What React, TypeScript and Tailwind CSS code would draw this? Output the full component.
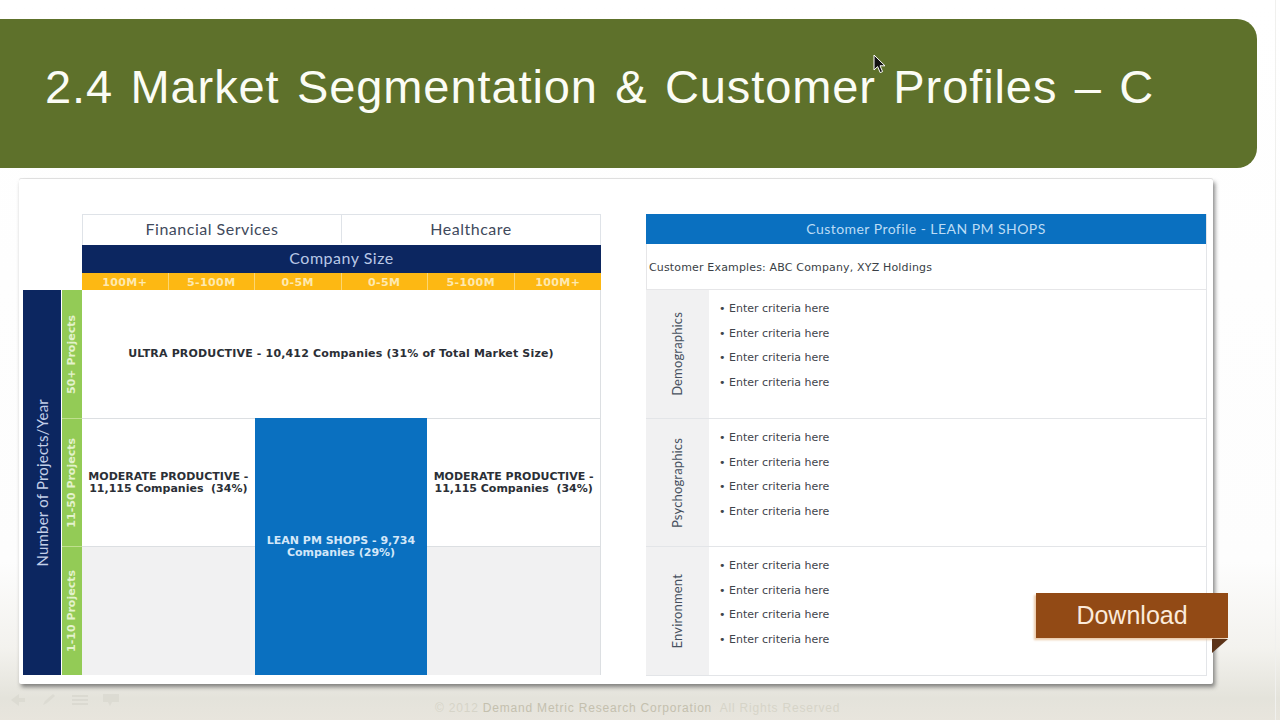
import React from 'react';

const SIZES = ['100M+', '5-100M', '0-5M', '0-5M', '5-100M', '100M+'];
const PROFILE = [
  { name: 'Demographics', rowClass: 'h-[129px]' },
  { name: 'Psychographics', rowClass: 'h-[128px]' },
  { name: 'Environment', rowClass: 'h-[128px]' },
];

const gothic = "font-['Lato','Open_Sans',sans-serif]";
const verdana = "font-['DejaVu_Sans',sans-serif]";

function Cursor() {
  return (
    <svg className="absolute left-[873px] top-[54px]" width="13" height="20" viewBox="0 0 13 20">
      <path d="M1 1v15l3.6-3.4 2.6 6 2.4-1-2.6-5.8h5z" fill="#111" stroke="#fff" strokeWidth="1" />
    </svg>
  );
}

function MediaIcons() {
  return (
    <div className="absolute left-[10px] top-[693px] flex items-center gap-[15px] opacity-50">
      <svg width="16" height="14" viewBox="0 0 16 14"><path d="M1 7l8-6v4h6v4H9v4z" fill="#d5d4cb" /></svg>
      <svg width="16" height="14" viewBox="0 0 16 14"><path d="M2 12l2-4 8-7 2 2-8 7z" fill="#d5d4cb" /></svg>
      <svg width="16" height="14" viewBox="0 0 16 14"><path d="M0 2h16v2H0zM0 6h16v2H0zM0 10h16v2H0z" fill="#d2d1c8" /></svg>
      <svg width="16" height="14" viewBox="0 0 16 14"><path d="M0 1h16v8H9l-2 4-2-4H0z" fill="#d5d4cb" /></svg>
    </div>
  );
}

function Matrix() {
  return (
    <div className="grid w-[578px] grid-cols-[39px_20px_519px] grid-rows-[31px_28px_17px_385px] gap-x-0">
      <div className="col-start-3 row-start-1 flex border border-[#dfe3e8] border-b-0 bg-white pb-[2px] text-[16px] tracking-[0.5px] text-[#3f4a5c]">
        <div className={`flex flex-1 items-center justify-center border-r border-[#dfe3e8] ${gothic}`}>Financial Services</div>
        <div className={`flex flex-1 items-center justify-center ${gothic}`}>Healthcare</div>
      </div>
      <div className={`col-start-3 row-start-2 flex items-center justify-center bg-[#0c2660] pb-[2px] text-[16px] tracking-[0.5px] text-[#b9c8e6] ${gothic}`}>
        Company Size
      </div>
      <div className="col-start-3 row-start-3 grid grid-cols-6 bg-[#fdb813]">
        {SIZES.map((size, i) => (
          <div
            key={i}
            className={`flex items-center justify-center border-[#fcd672] pt-[2px] text-[11px] font-bold tracking-[0.4px] text-[#fde9b0] ${verdana} ${i < 5 ? 'border-r' : ''}`}
          >
            {size}
          </div>
        ))}
      </div>

      <div className="col-start-1 row-start-4 mr-px flex items-center justify-center bg-[#0c2660]">
        <span className={`rotate-180 text-[15px] tracking-[0.2px] text-[#c3cfe8] [writing-mode:vertical-rl] ${gothic}`}>Number of Projects/Year</span>
      </div>
      <div className="col-start-2 row-start-4 grid grid-rows-[129px_128px_128px] divide-y divide-[#bfe08e] bg-[#93cb56]">
        {['50+ Projects', '11-50 Projects', '1-10 Projects'].map((label) => (
          <div key={label} className="flex items-center justify-center">
            <span className={`rotate-180 text-[11px] font-bold text-[#e3f2cd] [writing-mode:vertical-rl] ${verdana}`}>{label}</span>
          </div>
        ))}
      </div>
      <div className={`col-start-3 row-start-4 grid grid-cols-3 grid-rows-[129px_128px_128px] border-r border-b border-[#dcdfe2] text-center text-[11px] font-bold leading-[12px] text-[#2b2f36] ${verdana}`}>
        <div className="col-span-3 flex items-center justify-center border-b border-[#dcdfe2] bg-white tracking-[0.16px]">
          ULTRA PRODUCTIVE - 10,412 Companies (31% of Total Market Size)
        </div>
        <div className="flex items-center justify-center border-b border-[#dcdfe2] bg-white px-1">
          MODERATE PRODUCTIVE - 11,115 Companies&nbsp; (34%)
        </div>
        <div className="row-span-2 -mt-px flex items-center justify-center bg-[#0a70c0] px-2 text-[#d3e7f8]">
          LEAN PM SHOPS - 9,734 Companies (29%)
        </div>
        <div className="flex items-center justify-center border-b border-[#dcdfe2] bg-white px-1">
          MODERATE PRODUCTIVE - 11,115 Companies&nbsp; (34%)
        </div>
        <div className="bg-[#f1f1f2]" />
        <div className="bg-[#f1f1f2]" />
      </div>
    </div>
  );
}

function Profile() {
  return (
    <div className="flex w-[561px] flex-col border-r border-b border-[#e3e5e8]">
      <div className={`flex h-[30px] items-center justify-center bg-[#0a70c0] pb-[2px] text-[14px] tracking-[0.45px] text-[#bcdcf5] ${gothic}`}>
        Customer Profile - LEAN PM SHOPS
      </div>
      <div className={`flex h-[46px] items-center border-b border-l border-[#e6e6e8] pl-[2px] pt-[3px] text-[11px] tracking-[0.16px] text-[#3a3f46] ${verdana}`}>
        Customer Examples: ABC Company, XYZ Holdings
      </div>
      {PROFILE.map((row, i) => (
        <div key={row.name} className={`flex ${row.rowClass} ${i < 2 ? 'border-b border-[#e3e5e8]' : ''}`}>
          <div className="flex w-[63px] items-center justify-center bg-[#f1f1f2]">
            <span className={`rotate-180 text-[13px] tracking-[0.15px] text-[#46505e] [writing-mode:vertical-rl] ${gothic}`}>{row.name}</span>
          </div>
          <ul className={`flex flex-col gap-[9.6px] pl-[10px] pt-[11px] text-[11px] leading-[15px] text-[#3f444b] ${verdana}`}>
            {[0, 1, 2, 3].map((n) => (
              <li key={n}>•&nbsp;Enter criteria here</li>
            ))}
          </ul>
        </div>
      ))}
    </div>
  );
}

export default function App() {
  return (
    <div className="relative h-[720px] w-[1280px] overflow-hidden bg-[linear-gradient(180deg,#ffffff_0%,#fdfdfd_78%,#f3f2ee_90%,#e4e3db_97%,#e8e5dd_100%)] pt-[19px]">
      <div className="flex h-[149px] w-[1257px] items-center rounded-r-[20px] bg-[#5e712b] pl-[45px] pb-[14px]">
        <h1 className="font-['Liberation_Sans',sans-serif] text-[47px] leading-none tracking-[0.9px] text-[#fbfcf5] [word-spacing:3.5px]">
          2.4 Market Segmentation &amp; Customer Profiles – C
        </h1>
      </div>

      <div className="ml-[19px] mt-[11px] flex h-[505px] w-[1194px] items-start gap-[45px] rounded-[2px] bg-white pl-[4px] pt-[35px] shadow-[2px_3px_4px_rgba(70,70,70,0.65),0_-1px_0_#e6e6e6]">
        <Matrix />
        <Profile />
      </div>

      <div className="absolute left-[1036px] top-[593px] flex h-[45px] w-[192px] items-center justify-center bg-[#924a15] font-['Liberation_Sans',sans-serif] text-[25px] text-[#fbeadb] shadow-[-2px_2px_2px_rgba(230,190,150,0.8)]">
        Download
      </div>
      <svg className="absolute left-[1212px] top-[639px]" width="16" height="14" viewBox="0 0 16 14">
        <path d="M0 0h16L0 14z" fill="#5c3318" />
      </svg>

      <Cursor />
      <MediaIcons />
      <div className="absolute left-[435px] top-[699px] font-['Liberation_Sans',sans-serif] text-[12px] tracking-[0.8px] text-[#d6d4c8]">
        © 2012 <span className="text-[#c4c0ae]">Demand Metric Research Corporation</span>&nbsp; All Rights Reserved
      </div>
      <div className="absolute left-[1275px] top-0 h-full w-px bg-[#f0f0ee]" />
    </div>
  );
}
